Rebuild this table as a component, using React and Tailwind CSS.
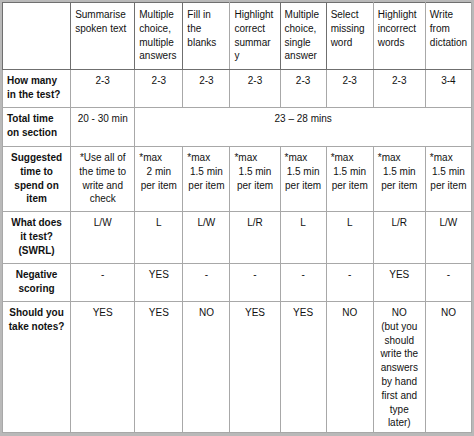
const DARK = "border-[#6f6f6f]";
const LIGHT = "border-[#a8a8a8]";

const header = [
  { text: "", r: DARK },
  { text: "Summarise\nspoken text", r: DARK },
  { text: "Multiple\nchoice,\nmultiple\nanswers", r: DARK },
  { text: "Fill in\nthe\nblanks", r: LIGHT },
  { text: "Highlight\ncorrect\nsummar\ny", r: DARK },
  { text: "Multiple\nchoice,\nsingle\nanswer", r: DARK },
  { text: "Select\nmissing\nword", r: LIGHT },
  { text: "Highlight\nincorrect\nwords", r: LIGHT },
  { text: "Write\nfrom\ndictation", r: LIGHT },
];

const widths = [68, 64, 48, 47, 50, 46, 47, 52, 46];

const rows = [
  {
    label: "How many\nin the test?",
    left: true,
    h: "h-[38px]",
    cells: ["2-3", "2-3", "2-3", "2-3", "2-3", "2-3", "2-3", "3-4"],
  },
  {
    label: "Suggested\ntime to\nspend on\nitem",
    h: "h-[65px]",
    cells: [
      "*Use all of\nthe time to\nwrite and\ncheck",
      { max: "2 min\nper item" },
      { max: "1.5 min\nper item" },
      { max: "1.5 min\nper item" },
      { max: "1.5 min\nper item" },
      { max: "1.5 min\nper item" },
      { max: "1.5 min\nper item" },
      { max: "1.5 min\nper item" },
    ],
  },
  {
    label: "What does\nit test?\n(SWRL)",
    h: "h-[52px]",
    cells: ["L/W", "L", "L/W", "L/R", "L", "L", "L/R", "L/W"],
  },
  {
    label: "Negative\nscoring",
    h: "h-[38px]",
    cells: ["-", "YES", "-", "-", "-", "-", "YES", "-"],
  },
  {
    label: "Should you\ntake notes?",
    h: "h-[131px]",
    cells: [
      "YES",
      "YES",
      "NO",
      "YES",
      "YES",
      "NO",
      "NO\n(but you\nshould\nwrite the\nanswers\nby hand\nfirst and\ntype\nlater)",
      "NO",
    ],
  },
];

const cell = `border ${LIGHT} align-top px-[4px] pt-[4px] whitespace-pre-line`;

function Body({ row }) {
  return (
    <tr className={row.h}>
      <td className={`${cell} font-bold ${row.left ? "text-left" : "text-center"}`}>
        {row.label}
      </td>
      {row.cells.map((c, i) => (
        <td key={i} className={`${cell} text-center`}>
          {typeof c === "string" ? (
            c
          ) : (
            <>
              <div className="text-left">*max</div>
              <div>{c.max}</div>
            </>
          )}
        </td>
      ))}
    </tr>
  );
}

export default function App() {
  return (
    <div className="w-[474px] h-[436px] bg-[#b9b9b9] pl-[2px] pt-[2px] overflow-hidden">
      <div className="w-[470px] h-[431px] bg-white">
        <table
          className="table-fixed border-collapse text-[10px] leading-[13.8px] text-[#111]"
          style={{ fontFamily: '"Liberation Sans", Arial, sans-serif', width: 470 }}
        >
          <colgroup>
            {widths.map((w, i) => (
              <col key={i} style={{ width: w }} />
            ))}
          </colgroup>
          <tbody>
            <tr className="h-[67px]">
              {header.map((h, i) => (
                <td
                  key={i}
                  className={`border ${DARK} ${h.r === LIGHT ? "border-r-[#a8a8a8]" : ""} align-top px-[4px] pt-[5px] text-left whitespace-pre-line`}
                >
                  {h.text}
                </td>
              ))}
            </tr>
            <Body row={rows[0]} />
            <tr className="h-[39px]">
              <td className={`${cell} font-bold text-left`}>{"Total time\non section"}</td>
              <td className={`${cell} text-center`}>20 - 30 min</td>
              <td colSpan={7} className={`${cell} text-center`}>
                23 – 28 mins
              </td>
            </tr>
            {rows.slice(1).map((r, i) => (
              <Body key={i} row={r} />
            ))}
          </tbody>
        </table>
      </div>
    </div>
  );
}
